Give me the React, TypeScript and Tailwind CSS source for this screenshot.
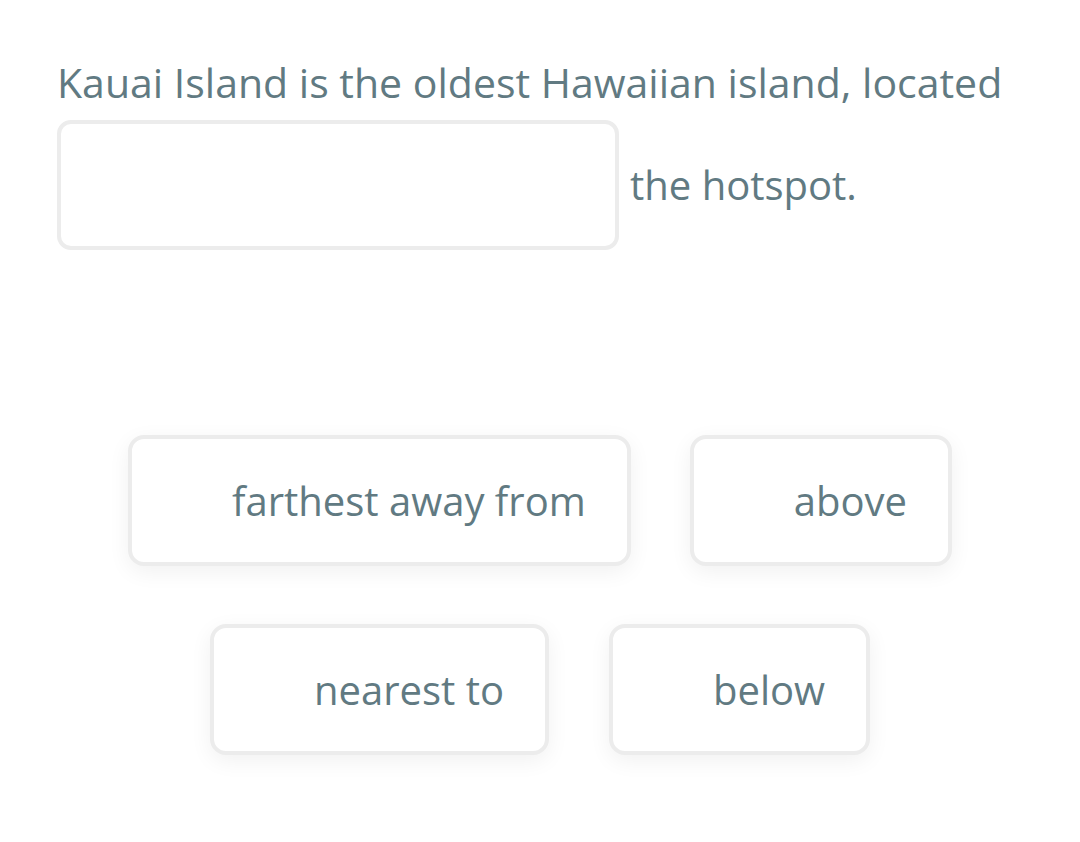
import React from "react";

const Choice = ({ label }: { label: string }) => (
  <div className="h-[131px] flex items-center rounded-[16px] border-[4px] border-[#ececec] bg-white pl-[100px] pr-[41px] shadow-[0_6px_22px_rgba(0,0,0,0.06)]">
    <span className="text-[40px] leading-none text-[#617a82] whitespace-nowrap">{label}</span>
  </div>
);

export default function App() {
  return (
    <div
      className="w-[1080px] h-[842px] bg-white text-[#617a82]"
      style={{ fontFamily: '"Open Sans", "Noto Sans", sans-serif' }}
    >
      <div className="pl-[57px] pt-[52px]">
        <p className="text-[41px] leading-[60px] whitespace-nowrap">
          Kauai Island is the oldest Hawaiian island, located
        </p>
        <div className="flex items-center gap-[11px] mt-[8px]">
          <div className="w-[562px] h-[130px] rounded-[14px] border-[4px] border-[#ececec] bg-white" />
          <span className="text-[40px]">the hotspot.</span>
        </div>
      </div>
      <div className="mt-[185px] flex justify-center gap-x-[59px]">
        <Choice label="farthest away from" />
        <Choice label="above" />
      </div>
      <div className="mt-[58px] flex justify-center gap-x-[60px]">
        <Choice label="nearest to" />
        <Choice label="below" />
      </div>
    </div>
  );
}
